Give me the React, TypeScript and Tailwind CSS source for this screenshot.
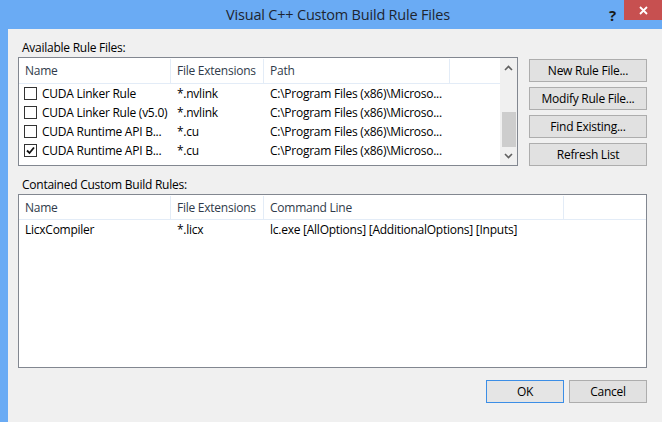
import React from "react";

const font = { fontFamily: '"Open Sans", "Noto Sans", sans-serif' };

const rules = [
  { name: "CUDA Linker Rule", ext: "*.nvlink", path: "C:\\Program Files (x86)\\Microso...", checked: false },
  { name: "CUDA Linker Rule (v5.0)", ext: "*.nvlink", path: "C:\\Program Files (x86)\\Microso...", checked: false },
  { name: "CUDA Runtime API B...", ext: "*.cu", path: "C:\\Program Files (x86)\\Microso...", checked: false },
  { name: "CUDA Runtime API B...", ext: "*.cu", path: "C:\\Program Files (x86)\\Microso...", checked: true },
];

function CheckBox({ checked }: { checked: boolean }) {
  return (
    <span className="flex h-[13px] w-[13px] shrink-0 items-center justify-center border border-[#333] bg-white">
      {checked && (
        <svg width="9" height="9" viewBox="0 0 9 9">
          <path d="M1 4.5 L3.5 7 L8 1.5" fill="none" stroke="#111" strokeWidth="1.8" />
        </svg>
      )}
    </span>
  );
}

function Button({ label, w = "w-[118px]", primary = false }: { label: string; w?: string; primary?: boolean }) {
  return (
    <div
      className={`flex h-[23px] ${w} items-center justify-center border text-[12px] text-black ${
        primary ? "border-[#3c8ee6] bg-[#e5e5e5]" : "border-[#adadad] bg-[#e1e1e1]"
      }`}
    >
      {label}
    </div>
  );
}

function HeaderCell({ label, w }: { label: string; w: string }) {
  return (
    <div className={`flex h-full ${w} shrink-0 items-center border-r border-[#e3ecf7] pl-[6px] text-[#2f3a4a]`}>
      {label}
    </div>
  );
}

export default function App() {
  return (
    <div
      className="flex h-[422px] w-[662px] flex-col overflow-hidden bg-[#6aabf4] text-[12px] tracking-[-0.25px]"
      style={font}
    >
      {/* title bar */}
      <div className="relative flex h-[29px] shrink-0 items-center justify-center pl-[14px]">
        <span className="text-[14.5px] tracking-[-0.2px] text-[#1e2530]">Visual C++ Custom Build Rule Files</span>
        <span className="absolute left-[609px] top-[4px] text-[15px] font-bold text-[#1a1a1a]">?</span>
        <div className="absolute right-0 top-0 flex h-[20px] w-[38px] items-center justify-center bg-[#c75050]">
          <svg width="9" height="9" viewBox="0 0 9 9">
            <path d="M1 1 L8 8 M8 1 L1 8" stroke="#fff" strokeWidth="1.8" />
          </svg>
        </div>
      </div>

      <div className="flex flex-1">
        <div className="w-[8px] shrink-0" />
        <div className="flex flex-1 flex-col bg-[#f0f0f0] pl-[10px] text-black">
          <div className="mt-[10px] h-[18px] pl-[4px] leading-[18px]">Available Rule Files:</div>

          <div className="flex">
            {/* list 1 */}
            <div className="flex h-[109px] w-[500px] border border-[#828790] bg-white">
              <div className="flex flex-1 flex-col">
                <div className="flex h-[26px] border-b border-[#e3ecf7] pt-[1px]">
                  <HeaderCell label="Name" w="w-[152px]" />
                  <HeaderCell label="File Extensions" w="w-[93px]" />
                  <HeaderCell label="Path" w="w-[186px]" />
                  <div className="flex-1" />
                </div>
                {rules.map((r, i) => (
                  <div key={i} className="flex h-[19px] items-center">
                    <div className="flex w-[152px] shrink-0 items-center gap-[5px] pl-[5px]">
                      <CheckBox checked={r.checked} />
                      <span className="whitespace-nowrap">{r.name}</span>
                    </div>
                    <div className="w-[93px] shrink-0 pl-[6px]">{r.ext}</div>
                    <div className="w-[186px] shrink-0 whitespace-nowrap pl-[6px]">{r.path}</div>
                  </div>
                ))}
              </div>
              {/* scrollbar */}
              <div className="flex w-[17px] shrink-0 flex-col items-center bg-[#f0f0f0]">
                <div className="flex h-[20px] w-full items-center justify-center">
                  <svg width="9" height="6" viewBox="0 0 9 6">
                    <path d="M1 5 L4.5 1.5 L8 5" fill="none" stroke="#606060" strokeWidth="1.6" />
                  </svg>
                </div>
                <div className="mt-[34px] h-[35px] w-[14px] bg-[#cdcdcd]" />
                <div className="mt-auto flex h-[18px] w-full items-center justify-center">
                  <svg width="9" height="6" viewBox="0 0 9 6">
                    <path d="M1 1 L4.5 4.5 L8 1" fill="none" stroke="#606060" strokeWidth="1.6" />
                  </svg>
                </div>
              </div>
            </div>

            {/* side buttons */}
            <div className="ml-[11px] mt-[2px] flex flex-col gap-[5px]">
              <Button label="New Rule File..." />
              <Button label="Modify Rule File..." />
              <Button label="Find Existing..." />
              <Button label="Refresh List" />
            </div>
          </div>

          <div className="mt-[10px] h-[18px] pl-[4px] leading-[18px]">Contained Custom Build Rules:</div>

          {/* list 2 */}
          <div className="flex h-[174px] w-[629px] flex-col border border-[#828790] bg-white">
            <div className="flex h-[25px] shrink-0 border-b border-[#e3ecf7] pt-[1px]">
              <HeaderCell label="Name" w="w-[152px]" />
              <HeaderCell label="File Extensions" w="w-[93px]" />
              <HeaderCell label="Command Line" w="w-[300px]" />
              <div className="flex-1" />
            </div>
            <div className="flex h-[20px] items-center">
              <div className="w-[152px] shrink-0 pl-[6px]">LicxCompiler</div>
              <div className="w-[93px] shrink-0 pl-[6px]">*.licx</div>
              <div className="whitespace-nowrap pl-[6px]">lc.exe [AllOptions] [AdditionalOptions] [Inputs]</div>
            </div>
          </div>

          <div className="mt-[12px] flex w-[629px] justify-end gap-[5px]">
            <Button label="OK" w="w-[78px]" primary />
            <Button label="Cancel" w="w-[78px]" />
          </div>
        </div>
      </div>
    </div>
  );
}
